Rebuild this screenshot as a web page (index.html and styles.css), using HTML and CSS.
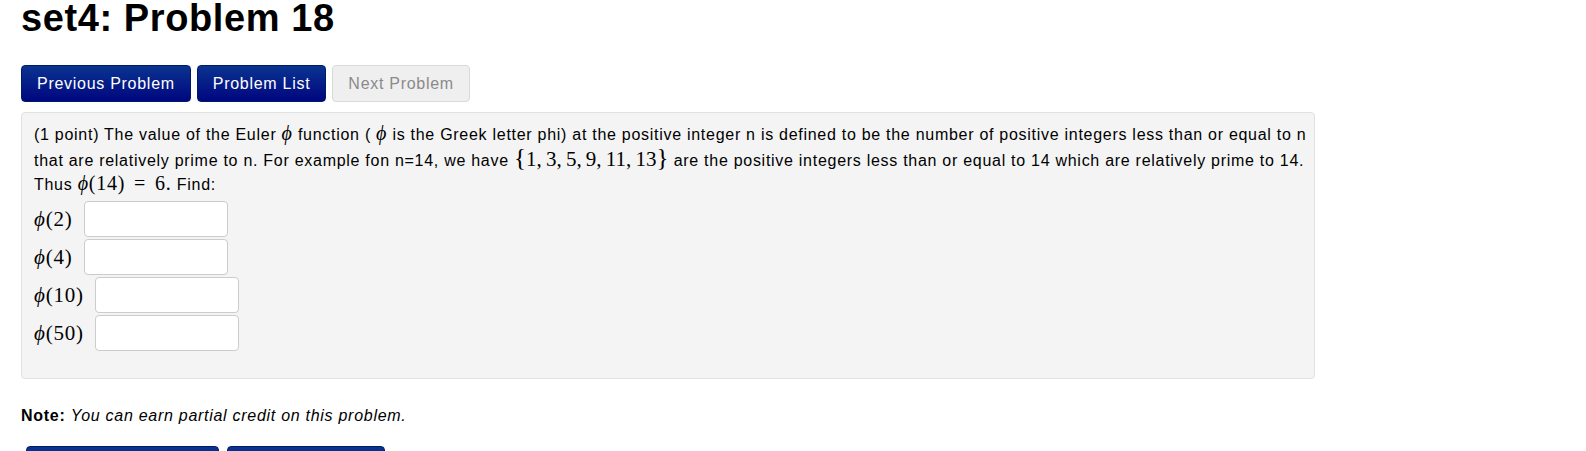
FILE: index.html
```html
<!DOCTYPE html>
<html>
<head>
<meta charset="utf-8">
<link rel="stylesheet" href="styles.css">
</head>
<body>
<div class="page">
  <h1 class="title">set4: Problem 18</h1>
  <div class="nav">
    <a class="btn btn-primary">Previous Problem</a>
    <a class="btn btn-primary">Problem List</a>
    <span class="btn btn-disabled">Next Problem</span>
  </div>
  <div class="problem">
    <div class="text">(1 point) The value of the Euler <span class="math"><i class="phi">ϕ</i></span> function ( <span class="math"><i class="phi">ϕ</i></span> is the Greek letter phi) at the positive integer n is defined to be the number of positive integers less than or equal to n that are relatively prime to n. For example fon n=14, we have <span class="math set"><span class="brace">{</span>1,&thinsp;3,&thinsp;5,&thinsp;9,&thinsp;11,&thinsp;13<span class="brace">}</span></span> are the positive integers less than or equal to 14 which are relatively prime to 14. Thus <span class="math"><i class="phi">ϕ</i>(14) <span class="eq">=</span> 6.</span> Find:</div>
    <div class="answers">
      <div class="row"><span class="math label"><i class="phi">ϕ</i>(2)</span><input class="ans" type="text"></div>
      <div class="row"><span class="math label"><i class="phi">ϕ</i>(4)</span><input class="ans" type="text"></div>
      <div class="row"><span class="math label"><i class="phi">ϕ</i>(10)</span><input class="ans" type="text"></div>
      <div class="row"><span class="math label"><i class="phi">ϕ</i>(50)</span><input class="ans" type="text"></div>
    </div>
  </div>
  <p class="note"><b>Note:</b> <i>You can earn partial credit on this problem.</i></p>
  <div class="submit">
    <span class="btn btn-primary sbtn1">Preview My Answers</span>
    <span class="btn btn-primary sbtn2">Submit Answers</span>
  </div>
</div>
</body>
</html>
```
FILE: styles.css
```css
html, body {
  margin: 0;
  padding: 0;
  background: #ffffff;
}
body {
  font-family: "Liberation Sans", Arial, sans-serif;
  font-size: 16px;
  letter-spacing: 0.72px;
  color: #000;
  overflow: hidden;
}
.page {
  padding-left: 21px;
  width: 1294px;
}
.title {
  font-size: 38px;
  line-height: 40px;
  font-weight: bold;
  letter-spacing: 0.6px;
  margin: -2px 0 27px 0;
}
.nav {
  display: flex;
  gap: 6px;
  height: 37px;
}
.btn {
  display: inline-flex;
  align-items: center;
  justify-content: center;
  box-sizing: border-box;
  height: 37px;
  padding: 0 15px;
  border-radius: 4px;
  font-size: 16px;
  white-space: nowrap;
}
.btn-primary {
  color: #fff;
  background: linear-gradient(to bottom, #0a3490, #00067f);
  border: 1px solid #001a66;
}
.btn-disabled {
  color: #8a8a8a;
  background: #efefef;
  border: 1px solid #d9d9d9;
}
.problem {
  margin-top: 10px;
  background: #f4f4f4;
  border: 1px solid #e1e1e1;
  border-radius: 4px;
  padding: 9px 4px 27px 12px;
}
.text {
  line-height: 23px;
}
.math {
  font-family: "Liberation Serif", "DejaVu Serif", serif;
  font-size: 20px;
  letter-spacing: 0.8px;
}
.set {
  font-size: 21px;
  letter-spacing: 0;
  white-space: nowrap;
}
.label {
  font-size: 21px;
}
.phi {
  font-style: italic;
}
.brace {
  font-size: 25px;
}
.eq {
  padding: 0 3px;
}
.answers {
  display: flex;
  flex-direction: column;
  gap: 2px;
  margin-top: 5px;
}
.row {
  display: flex;
  align-items: center;
  gap: 11px;
}
.ans {
  box-sizing: border-box;
  width: 144px;
  height: 36px;
  border: 1px solid #cccccc;
  border-radius: 4px;
  background: #fff;
  padding: 4px 6px;
  font-size: 14px;
}
.note {
  margin: 27px 0 0 0;
  font-size: 16px;
  line-height: 20px;
}
.submit {
  display: flex;
  gap: 8px;
  margin-top: 20px;
  padding-left: 5px;
}
.sbtn1 { width: 193px; }
.sbtn2 { width: 158px; }
```
